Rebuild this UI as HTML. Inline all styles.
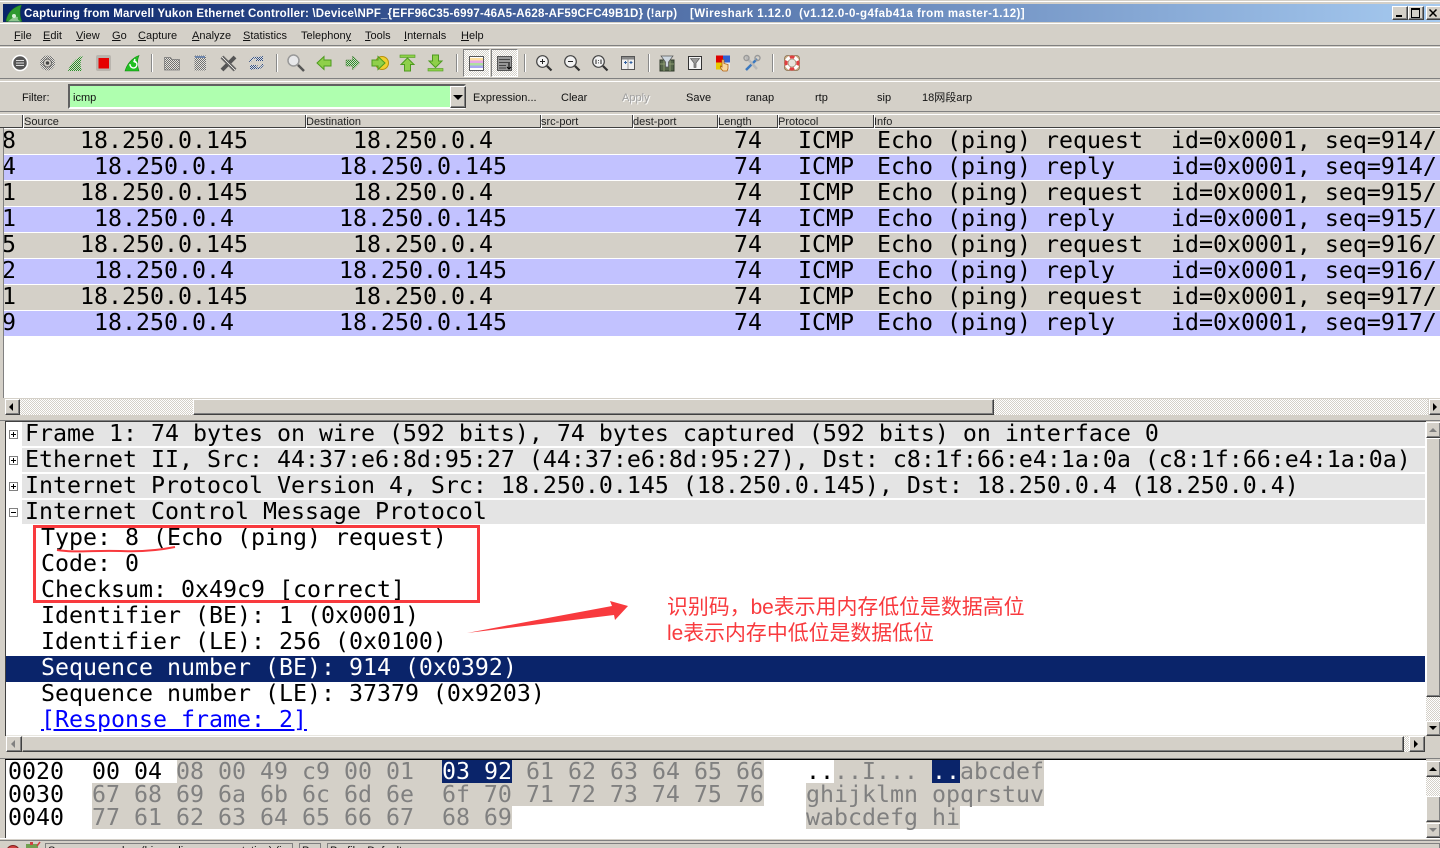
<!DOCTYPE html>
<html><head><meta charset="utf-8"><title>Wireshark</title>
<style>
html,body{margin:0;padding:0;width:1440px;height:848px;overflow:hidden;background:#d4d0c8}
body{position:relative;font-family:"Liberation Sans","Noto Sans CJK SC",sans-serif;font-size:11px;color:#000}
div,span{position:absolute;white-space:pre}
u{position:static}
.hl{left:0;width:1440px;height:1px}
.ui{font-size:11px;line-height:14px;color:#111}
.row{left:4px;width:1436px;height:25px;overflow:hidden;background:#d4d0c8}
.row.b{background:#c2c2ff}
.m,.row span,.dt span{font-family:"DejaVu Sans Mono","Liberation Mono",monospace;font-size:23.25px;line-height:26px;color:#000}
.m{position:absolute}
.row span{top:-1px}
.c0{left:-2px}.a1{left:76px}.a2{left:90px}.d1{left:349px}.d2{left:335px}.l{left:730px}.p{left:794px}.i{left:873px}
.gb{left:22px;width:1403px;height:24px;background:#e4e4e4}
.ex{left:9px;width:7px;height:7px;border:1px solid #808080;background:#fff}
.ex:before{content:"";position:absolute;left:1px;top:3px;width:5px;height:1px;background:#000}
.ex.p2:after{content:"";position:absolute;left:3px;top:1px;width:1px;height:5px;background:#000}
.ck{background:repeating-conic-gradient(#d4d0c8 0 25%,#fff 0 50%) 0 0/2px 2px}
.btn{background:#d4d0c8;box-sizing:border-box;border:1px solid;border-color:#fff #404040 #404040 #fff;box-shadow:inset -1px -1px 0 #808080}
.h{font-size:11px;line-height:13px;color:#222;top:116px}
.hs{top:115px;width:1px;height:13px;background:#404040;box-shadow:1px 0 0 #fff}
.hx{height:23px;background:#d4d0c8}
</style></head><body>

<!-- title bar -->
<div class="hl" style="top:1px;background:#fff"></div>
<div style="left:3px;top:4px;width:1437px;height:18px;background:linear-gradient(90deg,#0a246a,#a6caf0)"></div>
<div class="hl" style="top:23px;background:#fff"></div>
<div style="left:24px;top:7px;font-weight:bold;font-size:11.5px;line-height:14px;color:#fff;letter-spacing:0.2px">Capturing from Marvell Yukon Ethernet Controller: \Device\NPF_{EFF96C35-6997-46A5-A628-AF59CFC49B1D} (!arp)</div>
<div style="left:690px;top:7px;font-weight:bold;font-size:11.5px;line-height:14px;color:#fff;letter-spacing:0.43px">[Wireshark 1.12.0  (v1.12.0-0-g4fab41a from master-1.12)]</div>
<div class="btn" style="left:1392px;top:6px;width:16px;height:14px"></div>
<div class="btn" style="left:1408px;top:6px;width:16px;height:14px"></div>
<div class="btn" style="left:1426px;top:6px;width:16px;height:14px"></div>
<div style="left:1396px;top:15px;width:6px;height:2px;background:#000"></div>
<div style="left:1411px;top:8px;width:7px;height:7px;border:1px solid #000;border-top-width:2px"></div>
<svg style="position:absolute;left:1429px;top:9px" width="9" height="8"><path d="M0.5 0.5L7.5 7.5M7.5 0.5L0.5 7.5" stroke="#000" stroke-width="1.5"/></svg>

<!-- menu -->
<div class="ui" style="left:14px;top:29px"><u>F</u>ile</div>
<div class="ui" style="left:43px;top:29px"><u>E</u>dit</div>
<div class="ui" style="left:76px;top:29px"><u>V</u>iew</div>
<div class="ui" style="left:112px;top:29px"><u>G</u>o</div>
<div class="ui" style="left:138px;top:29px"><u>C</u>apture</div>
<div class="ui" style="left:192px;top:29px"><u>A</u>nalyze</div>
<div class="ui" style="left:243px;top:29px"><u>S</u>tatistics</div>
<div class="ui" style="left:301px;top:29px">Telephon<u>y</u></div>
<div class="ui" style="left:365px;top:29px"><u>T</u>ools</div>
<div class="ui" style="left:404px;top:29px"><u>I</u>nternals</div>
<div class="ui" style="left:461px;top:29px"><u>H</u>elp</div>
<div class="hl" style="top:45px;background:#808080"></div>
<div class="hl" style="top:47px;background:#fff"></div>
<div class="hl" style="top:78px;background:#808080"></div>
<div class="hl" style="top:81px;background:#fff"></div>
<div class="hl" style="top:111px;background:#808080"></div>
<div class="hl" style="top:114px;background:#fff"></div>
<div class="hl" style="top:127px;background:#404040"></div>

<!-- toggled buttons -->
<div class="ck" style="left:463px;top:49px;width:27px;height:28px;border:1px solid;border-color:#808080 #fff #fff #808080;box-sizing:border-box"></div>
<div class="ck" style="left:491px;top:49px;width:27px;height:28px;border:1px solid;border-color:#808080 #fff #fff #808080;box-sizing:border-box"></div>

<!-- toolbar icons -->
<svg style="position:absolute;left:0;top:45px" width="810" height="36" viewBox="0 45 810 36">
<defs>
<pattern id="dg" width="2" height="2" patternUnits="userSpaceOnUse"><rect width="1" height="1" fill="#707070"/><rect x="1" y="1" width="1" height="1" fill="#707070"/><rect x="1" width="1" height="1" fill="#e4e2dc"/><rect y="1" width="1" height="1" fill="#e4e2dc"/></pattern>
<pattern id="dgr" width="2" height="2" patternUnits="userSpaceOnUse"><rect width="1" height="1" fill="#2a8a2a"/><rect x="1" y="1" width="1" height="1" fill="#2a8a2a"/><rect x="1" width="1" height="1" fill="#d4dcc8"/><rect y="1" width="1" height="1" fill="#d4dcc8"/></pattern>
<pattern id="db" width="2" height="2" patternUnits="userSpaceOnUse"><rect width="1" height="1" fill="#38507a"/><rect x="1" y="1" width="1" height="1" fill="#38507a"/><rect x="1" width="1" height="1" fill="#d8dde6"/><rect y="1" width="1" height="1" fill="#d8dde6"/></pattern>
</defs>
<!-- interfaces -->
<circle cx="20" cy="63" r="7.5" fill="#555" stroke="#fff" stroke-width="1.5"/><path d="M16 60.500h8M16 63h8M16 65.500h8" stroke="#ddd" stroke-width="1"/>
<!-- options -->
<circle cx="47.500" cy="63" r="7.500" fill="url(#dg)"/><circle cx="47.500" cy="63" r="4" fill="#d4d0c8" stroke="#666"/><circle cx="47.500" cy="63" r="1.800" fill="#444"/>
<!-- start -->
<path d="M68 71C70 64 76 58 83 55.500C80 60 80 66 82 71Z" fill="url(#dgr)"/>
<!-- stop -->
<rect x="96" y="55" width="15" height="16" rx="2" fill="#b9b5ae"/><rect x="98.500" y="58" width="10.500" height="10.500" fill="#e60000"/>
<!-- restart -->
<path d="M125 71C127 64 132 58 139 55.500C137 60 137 66 139 71Z" fill="#22c022" stroke="#0e8a0e" stroke-width=".6"/><path d="M130 64a3.500 3.500 0 1 0 4-3M135 59l-1 2.500 2 1" fill="none" stroke="#fff" stroke-width="1.400"/>
<rect x="151" y="54" width="1" height="18" fill="#8a8a8a"/><rect x="152" y="54" width="1" height="18" fill="#fff"/>
<!-- open -->
<path d="M164.500 57.500h6l1.500 2h7.500v10.500h-15z" fill="url(#dg)" stroke="#777" stroke-width=".7"/>
<!-- file -->
<path d="M194.500 55.500h11.500v15h-11.500z" fill="url(#dg)"/><path d="M195 56h10v2h-10z" fill="#6f86aa"/>
<!-- close -->
<path d="M222 57l13 13M235 57l-13 13" stroke="#555" stroke-width="4"/><path d="M222 57l13 13" stroke="url(#dg)" stroke-width="2"/>
<!-- reload -->
<path d="M249 62c1-4 5-6 9-5l5-1v5h-8l2-2c-3-1-5 0-6 3zM264 64c-1 4-5 6-9 5l-5 1v-5h8l-2 2c3 1 5 0 6-3z" fill="url(#db)"/>
<rect x="276" y="54" width="1" height="18" fill="#8a8a8a"/><rect x="277" y="54" width="1" height="18" fill="#fff"/>
<!-- find -->
<circle cx="293.500" cy="60.500" r="5.500" fill="#e8e8ea" stroke="#999" stroke-width="1.500"/><path d="M298 65l6 6" stroke="#555" stroke-width="2.500"/>
<!-- back -->
<path d="M317 63l7-6.500v3.500h7v6h-7v3.500z" fill="#8fd04a" stroke="#4c9a1e"/>
<!-- forward dithered -->
<path d="M359.500 63l-7-7v4h-6.500v6h6.500v4z" fill="url(#dgr)" stroke="#5a8a4a" stroke-width=".5"/>
<!-- goto -->
<circle cx="382" cy="63" r="6.500" fill="#f0d030" stroke="#b8920a"/><path d="M372 60h6v-3.500l7 6.500-7 6.500v-3.500h-6z" fill="#8fd04a" stroke="#4c9a1e"/>
<!-- first -->
<rect x="400" y="55" width="15" height="2.500" fill="#8fd04a" stroke="#4c9a1e" stroke-width=".6"/><path d="M407.500 58l6.500 6.500h-3.500v6.500h-6v-6.500h-3.500z" fill="#8fd04a" stroke="#4c9a1e"/>
<!-- last -->
<rect x="428" y="68.500" width="15" height="2.500" fill="#8fd04a" stroke="#4c9a1e" stroke-width=".6"/><path d="M435.500 67.500l6.500-6.500h-3.500v-6h-6v6h-3.500z" fill="#8fd04a" stroke="#4c9a1e"/>
<rect x="456" y="54" width="1" height="18" fill="#8a8a8a"/><rect x="457" y="54" width="1" height="18" fill="#fff"/>
<!-- color rows -->
<rect x="469.500" y="56.500" width="14" height="14" fill="#fff" stroke="#555"/><rect x="470" y="58" width="13" height="2.500" fill="#ffe0a0"/><rect x="470" y="60.500" width="13" height="2.500" fill="#e8a8e8"/><rect x="470" y="63" width="13" height="2.500" fill="#b0e0a0"/><rect x="470" y="65.500" width="13" height="2.500" fill="#a8a8f0"/>
<!-- auto scroll -->
<rect x="497.500" y="56.500" width="14" height="14" fill="#999" stroke="#555"/><path d="M499 59.500h11M499 62.500h11M499 65.500h7M499 68h7" stroke="#444"/><path d="M509 63v6M507 67l2 2 2-2" stroke="#000" fill="none"/>
<rect x="524" y="54" width="1" height="18" fill="#8a8a8a"/><rect x="525" y="54" width="1" height="18" fill="#fff"/>
<!-- zooms -->
<circle cx="542.500" cy="61.500" r="5.800" fill="#f2f2f2" stroke="#444" stroke-width="1.200"/><path d="M540 61.500h5M542.500 59v5" stroke="#222"/><path d="M547 66l4.500 4.500" stroke="#333" stroke-width="2.200"/>
<circle cx="570.500" cy="61.500" r="5.800" fill="#f2f2f2" stroke="#444" stroke-width="1.200"/><path d="M568 61.500h5" stroke="#222"/><path d="M575 66l4.500 4.500" stroke="#333" stroke-width="2.200"/>
<circle cx="598.500" cy="61.500" r="5.800" fill="#f2f2f2" stroke="#444" stroke-width="1.200"/><path d="M596 59.500v4.500M601 59.500v4.500M598.500 60v.8M598.500 62.500v.8" stroke="#222"/><path d="M603 66l4.500 4.500" stroke="#333" stroke-width="2.200"/>
<rect x="621.500" y="56.500" width="13" height="13" fill="#f0f0f0" stroke="#555"/><rect x="622" y="57" width="12" height="2.500" fill="#888"/><path d="M624 62.500h3M625.500 61v3M629.500 62.500h3M631 61v3" stroke="#3060a0"/><path d="M628 59v10" stroke="#999"/>
<rect x="648" y="54" width="1" height="18" fill="#8a8a8a"/><rect x="649" y="54" width="1" height="18" fill="#fff"/>
<!-- capture filter -->
<rect x="660" y="60" width="14" height="11" fill="#55664a" stroke="#2f3a2a"/><path d="M660 64h14M664 60v11M670 60v11" stroke="#8a9a70"/><path d="M661 56h12l-4.500 6v5h-3v-5z" fill="#cfd8e0" stroke="#555" stroke-width=".7"/>
<!-- display filter -->
<rect x="688.500" y="56.500" width="13" height="13" fill="#f4f4f4" stroke="#333"/><path d="M690.500 58.500h9l-3.500 4.500v4.500h-2v-4.500z" fill="#9a9a9a" stroke="#444" stroke-width=".6"/>
<!-- coloring -->
<rect x="716" y="55.500" width="7" height="7" fill="#d00"/><rect x="723" y="55.500" width="7" height="7" fill="#3060d0"/><rect x="716" y="62.500" width="7" height="7" fill="#e8c800"/><rect x="723" y="62.500" width="7" height="7" fill="#e8e8e8"/><path d="M723 71c-2-2-3-4-2.500-5l1.500 1v-6.500a1 1 0 0 1 2 0v3l4 1v4l-1 2.500z" fill="#f8d8a0" stroke="#b06010" stroke-width=".8"/>
<!-- prefs -->
<path d="M746 70l11-11" stroke="#3a78c0" stroke-width="2.500"/><path d="M746 57l11 12" stroke="#b8b8b8" stroke-width="2.500"/><circle cx="757.500" cy="58" r="2.500" fill="none" stroke="#999" stroke-width="1.400"/><circle cx="746.500" cy="58" r="2.500" fill="none" stroke="#999" stroke-width="1.400"/>
<rect x="772" y="54" width="1" height="18" fill="#8a8a8a"/><rect x="773" y="54" width="1" height="18" fill="#fff"/>
<!-- help -->
<rect x="784.500" y="55.500" width="15" height="15" rx="3" fill="#c8a880" stroke="#8a7050" stroke-width=".8"/>
<circle cx="792" cy="63" r="6" fill="#e8e4dc" stroke="#fff" stroke-width="3"/>
<circle cx="792" cy="63" r="6" fill="none" stroke="#e04040" stroke-width="3" stroke-dasharray="4.700 4.700" stroke-dashoffset="2.350"/>
<circle cx="792" cy="63" r="4" fill="#e8e4dc" stroke="#8a7050" stroke-width=".6"/>
</svg>

<!-- logo -->
<svg style="position:absolute;left:5px;top:4px" width="18" height="18"><path d="M1 17.500C2 9 8 3 16.500 1C14.500 6 14.500 12 17 17.500Z" fill="#2f9a2f" stroke="#1c6a1c" stroke-width=".5"/><path d="M3 17.500h13c-2-1-4-2-3-4.500c-3-1-6 1-10 4.500z" fill="#8fc88f"/><circle cx="9" cy="12" r="2" fill="#d8f0d8"/></svg>

<!-- filter bar -->
<div class="ui" style="left:22px;top:91px">Filter:</div>
<div style="left:68px;top:84px;width:398px;height:25px;box-sizing:border-box;background:#afffaf;border:2px solid;border-color:#606060 #d4d0c8 #fff #606060"></div>
<div class="ui" style="left:73px;top:91px">icmp</div>
<div class="btn" style="left:450px;top:86px;width:16px;height:22px"></div>
<div style="left:453px;top:95px;width:0;height:0;border:5px solid transparent;border-top:5px solid #000;border-bottom:0"></div>
<div class="ui" style="left:473px;top:91px">Expression...</div>
<div class="ui" style="left:561px;top:91px">Clear</div>
<div class="ui" style="left:623px;top:92px;color:#fff">Apply</div>
<div class="ui" style="left:622px;top:91px;color:#a0a0a0">Apply</div>
<div class="ui" style="left:686px;top:91px">Save</div>
<div class="ui" style="left:746px;top:91px">ranap</div>
<div class="ui" style="left:815px;top:91px">rtp</div>
<div class="ui" style="left:877px;top:91px">sip</div>
<div class="ui" style="left:922px;top:91px">18网段arp</div>

<!-- column headers -->
<div class="hs" style="left:22px"></div><div class="h" style="left:24px">Source</div>
<div class="hs" style="left:305px"></div><div class="h" style="left:306px">Destination</div>
<div class="hs" style="left:540px"></div><div class="h" style="left:541px">src-port</div>
<div class="hs" style="left:632px"></div><div class="h" style="left:633px">dest-port</div>
<div class="hs" style="left:717px"></div><div class="h" style="left:718px">Length</div>
<div class="hs" style="left:777px"></div><div class="h" style="left:778px">Protocol</div>
<div class="hs" style="left:873px"></div><div class="h" style="left:874px">Info</div>

<!-- packet list -->
<div style="left:3px;top:128px;width:1437px;height:270px;background:#fff;border-left:1px solid #808080;box-sizing:border-box"></div>
<div class="row" style="top:129px"><span class="c0">8</span><span class="a1">18.250.0.145</span><span class="d1">18.250.0.4</span><span class="l">74</span><span class="p">ICMP</span><span class="i">Echo (ping) request  id=0x0001, seq=914/</span></div>
<div class="row b" style="top:155px"><span class="c0">4</span><span class="a2">18.250.0.4</span><span class="d2">18.250.0.145</span><span class="l">74</span><span class="p">ICMP</span><span class="i">Echo (ping) reply    id=0x0001, seq=914/</span></div>
<div class="row" style="top:181px"><span class="c0">1</span><span class="a1">18.250.0.145</span><span class="d1">18.250.0.4</span><span class="l">74</span><span class="p">ICMP</span><span class="i">Echo (ping) request  id=0x0001, seq=915/</span></div>
<div class="row b" style="top:207px"><span class="c0">1</span><span class="a2">18.250.0.4</span><span class="d2">18.250.0.145</span><span class="l">74</span><span class="p">ICMP</span><span class="i">Echo (ping) reply    id=0x0001, seq=915/</span></div>
<div class="row" style="top:233px"><span class="c0">5</span><span class="a1">18.250.0.145</span><span class="d1">18.250.0.4</span><span class="l">74</span><span class="p">ICMP</span><span class="i">Echo (ping) request  id=0x0001, seq=916/</span></div>
<div class="row b" style="top:259px"><span class="c0">2</span><span class="a2">18.250.0.4</span><span class="d2">18.250.0.145</span><span class="l">74</span><span class="p">ICMP</span><span class="i">Echo (ping) reply    id=0x0001, seq=916/</span></div>
<div class="row" style="top:285px"><span class="c0">1</span><span class="a1">18.250.0.145</span><span class="d1">18.250.0.4</span><span class="l">74</span><span class="p">ICMP</span><span class="i">Echo (ping) request  id=0x0001, seq=917/</span></div>
<div class="row b" style="top:311px"><span class="c0">9</span><span class="a2">18.250.0.4</span><span class="d2">18.250.0.145</span><span class="l">74</span><span class="p">ICMP</span><span class="i">Echo (ping) reply    id=0x0001, seq=917/</span></div>

<!-- packet list hscroll -->
<div class="ck" style="left:20px;top:399px;width:1408px;height:16px"></div>
<div class="btn" style="left:193px;top:399px;width:801px;height:16px"></div>
<div class="btn" style="left:5px;top:399px;width:15px;height:16px"></div>
<div style="left:9px;top:403px;width:0;height:0;border:4px solid transparent;border-right:4px solid #000;border-left:0"></div>
<div class="btn" style="left:1429px;top:399px;width:14px;height:16px"></div>
<div style="left:1433px;top:403px;width:0;height:0;border:4px solid transparent;border-left:4px solid #000;border-right:0"></div>
<div class="hl" style="top:421px;left:5px;width:1421px;background:#000"></div>
<div class="hl" style="top:420px;background:#808080"></div>

<!-- details -->
<div class="dt" style="left:5px;top:421px;width:1421px;height:315px;background:#fff;border-left:1px solid #404040;border-top:1px solid #404040;box-sizing:border-box"></div>
<div class="gb" style="top:422px"></div><div class="gb" style="top:448px"></div><div class="gb" style="top:474px"></div><div class="gb" style="top:500px"></div>
<div class="ex p2" style="top:430px"></div><div class="ex p2" style="top:456px"></div><div class="ex p2" style="top:482px"></div><div class="ex" style="top:508px"></div>
<div style="left:6px;top:656px;width:1419px;height:26px;background:#0a246a"></div>
<div class="m" style="left:25px;top:421px">Frame 1: 74 bytes on wire (592 bits), 74 bytes captured (592 bits) on interface 0</div>
<div class="m" style="left:25px;top:447px">Ethernet II, Src: 44:37:e6:8d:95:27 (44:37:e6:8d:95:27), Dst: c8:1f:66:e4:1a:0a (c8:1f:66:e4:1a:0a)</div>
<div class="m" style="left:25px;top:473px">Internet Protocol Version 4, Src: 18.250.0.145 (18.250.0.145), Dst: 18.250.0.4 (18.250.0.4)</div>
<div class="m" style="left:25px;top:499px">Internet Control Message Protocol</div>
<div class="m" style="left:41px;top:525px">Type: 8 (Echo (ping) request)</div>
<div class="m" style="left:41px;top:551px">Code: 0</div>
<div class="m" style="left:41px;top:577px">Checksum: 0x49c9 [correct]</div>
<div class="m" style="left:41px;top:603px">Identifier (BE): 1 (0x0001)</div>
<div class="m" style="left:41px;top:629px">Identifier (LE): 256 (0x0100)</div>
<div class="m" style="left:41px;top:655px;color:#fff">Sequence number (BE): 914 (0x0392)</div>
<div class="m" style="left:41px;top:681px">Sequence number (LE): 37379 (0x9203)</div>
<div class="m" style="left:41px;top:707px;color:#0000ff;text-decoration:underline">[Response frame: 2]</div>

<!-- details vscroll -->
<div class="btn" style="left:1426px;top:422px;width:15px;height:16px"></div>
<div style="left:1429px;top:428px;width:0;height:0;border:4px solid transparent;border-bottom:4px solid #808080;border-top:0"></div>
<div class="btn" style="left:1426px;top:438px;width:15px;height:259px"></div>
<div class="ck" style="left:1426px;top:697px;width:14px;height:24px"></div>
<div class="btn" style="left:1426px;top:721px;width:15px;height:15px"></div>
<div style="left:1429px;top:726px;width:0;height:0;border:4px solid transparent;border-top:4px solid #000;border-bottom:0"></div>

<!-- details hscroll -->
<div class="hl" style="top:735px;left:6px;width:1420px;background:#e8e6e0"></div>
<div class="btn" style="left:6px;top:736px;width:16px;height:16px"></div>
<div style="left:11px;top:740px;width:0;height:0;border:4px solid transparent;border-right:4px solid #808080;border-left:0"></div>
<div class="btn" style="left:22px;top:736px;width:1382px;height:16px;border-left-color:#d4d0c8"></div>
<div class="ck" style="left:1404px;top:736px;width:5px;height:16px"></div>
<div class="btn" style="left:1409px;top:736px;width:16px;height:16px"></div>
<div style="left:1414px;top:740px;width:0;height:0;border:4px solid transparent;border-left:4px solid #000;border-right:0"></div>

<!-- hex pane -->
<div class="hl" style="top:758px;background:#808080"></div>
<div class="hl" style="top:759px;left:5px;width:1421px;background:#000"></div>
<div style="left:5px;top:760px;width:1421px;height:78px;background:#fff;border-left:1px solid #404040;box-sizing:border-box"></div>
<div class="hx" style="left:177px;top:760px;width:265px"></div>
<div style="left:442px;top:760px;width:70px;height:23px;background:#0a246a"></div>
<div class="hx" style="left:512px;top:760px;width:252px"></div>
<div class="hx" style="left:92px;top:783px;width:672px"></div>
<div class="hx" style="left:92px;top:806px;width:420px"></div>
<div class="hx" style="left:834px;top:760px;width:98px"></div>
<div style="left:932px;top:760px;width:28px;height:23px;background:#0a246a"></div>
<div class="hx" style="left:960px;top:760px;width:84px"></div>
<div class="hx" style="left:806px;top:783px;width:238px"></div>
<div class="hx" style="left:806px;top:806px;width:154px"></div>
<div class="m" style="left:8px;top:759px">0020</div>
<div class="m" style="left:8px;top:782px">0030</div>
<div class="m" style="left:8px;top:805px">0040</div>
<div class="m" style="left:92px;top:759px">00 04</div>
<div class="m" style="left:176px;top:759px;color:#808080">08 00 49 c9 00 01</div>
<div class="m" style="left:442px;top:759px;color:#fff">03 92</div>
<div class="m" style="left:526px;top:759px;color:#808080">61 62 63 64 65 66</div>
<div class="m" style="left:92px;top:782px;color:#808080">67 68 69 6a 6b 6c 6d 6e  6f 70 71 72 73 74 75 76</div>
<div class="m" style="left:92px;top:805px;color:#808080">77 61 62 63 64 65 66 67  68 69</div>
<div class="m" style="left:806px;top:759px">..</div>
<div class="m" style="left:834px;top:759px;color:#808080">..I...</div>
<div class="m" style="left:932px;top:759px;color:#fff">..</div>
<div class="m" style="left:960px;top:759px;color:#808080">abcdef</div>
<div class="m" style="left:806px;top:782px;color:#808080">ghijklmn opqrstuv</div>
<div class="m" style="left:806px;top:805px;color:#808080">wabcdefg hi</div>

<!-- hex vscroll -->
<div class="btn" style="left:1426px;top:761px;width:15px;height:16px"></div>
<div style="left:1429px;top:767px;width:0;height:0;border:4px solid transparent;border-bottom:4px solid #000;border-top:0"></div>
<div class="ck" style="left:1426px;top:777px;width:14px;height:19px"></div>
<div class="btn" style="left:1426px;top:796px;width:15px;height:26px"></div>
<div class="btn" style="left:1426px;top:823px;width:15px;height:15px"></div>
<div style="left:1429px;top:828px;width:0;height:0;border:4px solid transparent;border-top:4px solid #808080;border-bottom:0"></div>

<!-- status bar -->
<div class="hl" style="top:838px;background:#fff"></div>
<div class="hl" style="top:840px;background:#808080"></div>
<svg style="position:absolute;left:0;top:841px" width="46" height="7"><circle cx="13" cy="11" r="6.500" fill="#d04040" stroke="#802020"/><rect x="26" y="3" width="12" height="8" fill="#70a050"/><rect x="30" y="1" width="3" height="3" fill="#d04040"/><path d="M37 5l3-4" stroke="#d04040" stroke-width="1.500"/></svg>
<div style="left:45px;top:843px;width:248px;height:5px;border:1px solid #808080;border-bottom:0;overflow:hidden;box-sizing:border-box"><span class="ui" style="left:2px;top:0">Sequence number (big endian representation) (icmp.seq)</span></div>
<div style="left:299px;top:843px;width:22px;height:5px;border:1px solid #808080;border-bottom:0;overflow:hidden;box-sizing:border-box"><span class="ui" style="left:2px;top:0">P...</span></div>
<div style="left:327px;top:843px;width:1113px;height:5px;border:1px solid #808080;border-bottom:0;overflow:hidden;box-sizing:border-box"><span class="ui" style="left:2px;top:0">Profile: Default</span></div>

<!-- annotations -->
<div style="left:33px;top:525px;width:447px;height:78px;box-sizing:border-box;border:3px solid #f83a3e"></div>
<svg style="position:absolute;left:0;top:0;pointer-events:none" width="1440" height="848">
<path d="M57 550C75 553 95 550 120 551C140 552 160 550 175 547" fill="none" stroke="#f83a3e" stroke-width="2"/>
<polygon points="467,633 612,606 610,601 628,606 615,620 614,615" fill="#f83a3e"/>
</svg>
<div style="left:667px;top:594px;font-size:20.9px;line-height:28px;color:#f83a3e">识别码，be表示用内存低位是数据高位</div>
<div style="left:667px;top:620px;font-size:20.9px;line-height:28px;color:#f83a3e">le表示内存中低位是数据低位</div>
</body></html>
